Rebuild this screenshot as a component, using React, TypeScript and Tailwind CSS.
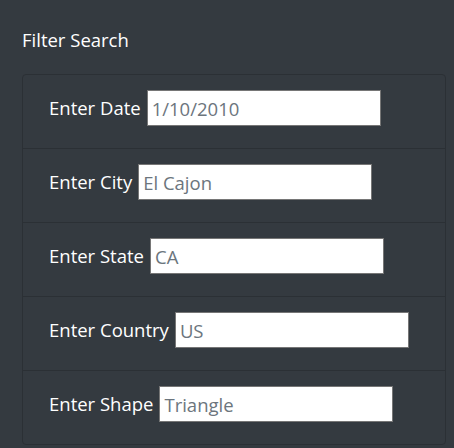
const fields = [
  { label: 'Enter Date', value: '1/10/2010' },
  { label: 'Enter City', value: 'El Cajon' },
  { label: 'Enter State', value: 'CA' },
  { label: 'Enter Country', value: 'US' },
  { label: 'Enter Shape', value: 'Triangle' },
];

export default function App() {
  return (
    <div
      className="w-[454px] h-[448px] overflow-hidden bg-[#343a40] text-white pl-[22px] pr-[8px]"
      style={{ fontFamily: '"Open Sans", "Noto Sans", sans-serif' }}
    >
      <h4 className="pt-[27px] text-[18.5px] leading-[26px]">Filter Search</h4>
      <ul className="mt-[21px] rounded-[4px] border border-[#2b3035]">
        {fields.map((f, i) => (
          <li
            key={f.label}
            className={`flex items-start pt-[15px] pl-[26px] gap-[6px] ${
              i < fields.length - 1 ? 'border-b border-[#2b3035] h-[74px]' : 'h-[73px]'
            }`}
          >
            <label className="text-[18.5px] leading-[36px]">{f.label}</label>
            <input
              defaultValue={f.value}
              className="w-[234px] h-[36px] bg-white border border-[#767676] px-[4px] text-[18.5px] text-[#6c757d] outline-none"
            />
          </li>
        ))}
      </ul>
    </div>
  );
}
